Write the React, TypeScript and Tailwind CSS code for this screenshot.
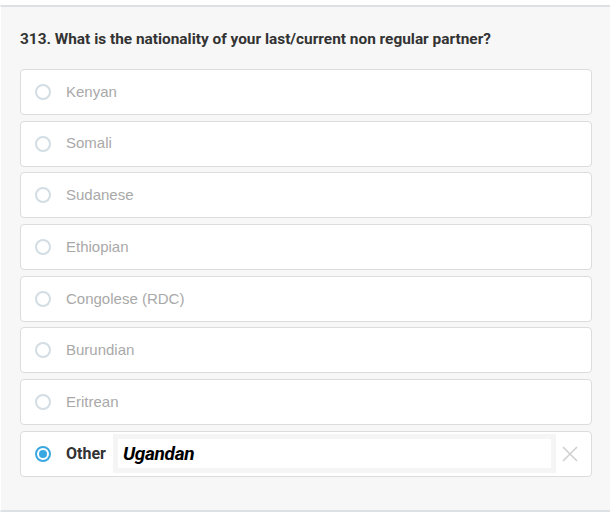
import React from "react";

const options = [
  "Kenyan",
  "Somali",
  "Sudanese",
  "Ethiopian",
  "Congolese (RDC)",
  "Burundian",
  "Eritrean",
];

export default function App() {
  return (
    <div className="w-[610px] h-[520px] bg-white overflow-hidden">
      <div className="mt-[5px] h-[507px] bg-[#f7f7f7] border-t-2 border-b-2 border-l border-[#dde1e4] border-l-white pl-[19px] pr-[18px] pt-[22px]">
        <div
          className="text-[15.4px] font-bold text-[#333] leading-[20px]"
          style={{ fontFamily: "Roboto, sans-serif" }}
        >
          313. What is the nationality of your last/current non regular partner?
        </div>
        <div className="mt-[20px] flex flex-col gap-[5.7px]">
          {options.map((o) => (
            <div
              key={o}
              className="h-[46px] bg-white border border-[#dcdcdc] rounded-[4px] flex items-center pl-[14px]"
            >
              <span className="w-[16px] h-[16px] rounded-full border-2 border-[#d3dde4] bg-white" />
              <span
                className="ml-[15px] text-[15px] text-[#a9a9a9]"
                style={{ fontFamily: "'Liberation Sans', Arial, sans-serif" }}
              >
                {o}
              </span>
            </div>
          ))}
          <div className="h-[46px] bg-white border border-[#dcdcdc] rounded-[4px] flex items-center pl-[14px]">
            <span className="w-[16px] h-[16px] rounded-full border-[2px] border-[#3aa8e0] bg-white flex items-center justify-center">
              <span className="w-[8px] h-[8px] rounded-full bg-[#3aa8e0]" />
            </span>
            <span
              className="ml-[15px] text-[16px] font-bold text-[#333]"
              style={{ fontFamily: "Roboto, sans-serif" }}
            >
              Other
            </span>
            <div className="ml-[7px] w-[443px] h-[39px] bg-[#f5f5f5] p-[5px]">
              <div
                className="h-full bg-white flex items-center pl-[5px] text-[19px] italic font-bold text-black"
                style={{ fontFamily: "Roboto, sans-serif", letterSpacing: "-0.3px" }}
              >
                Ugandan
              </div>
            </div>
            <svg
              className="ml-[6px]"
              width="16"
              height="16"
              viewBox="0 0 16 16"
            >
              <path d="M1 1 L15 15 M15 1 L1 15" stroke="#d0d0d0" strokeWidth="1.6" />
            </svg>
          </div>
        </div>
      </div>
    </div>
  );
}
